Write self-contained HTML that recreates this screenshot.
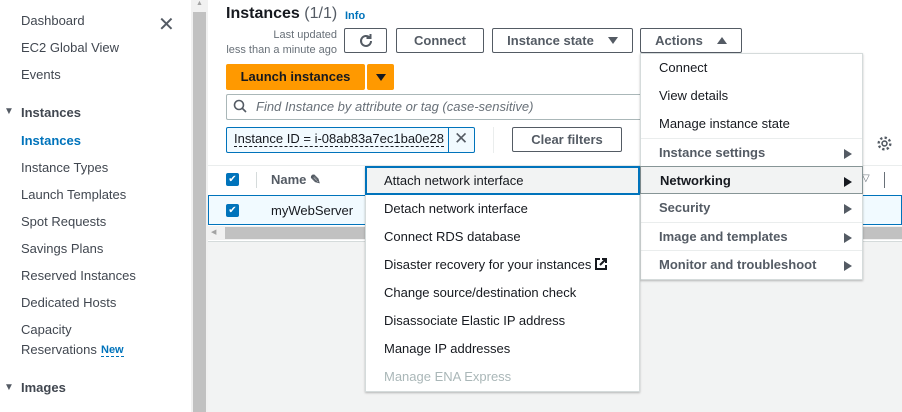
<!DOCTYPE html>
<html><head><style>
*{margin:0;padding:0;box-sizing:border-box}
body{width:902px;height:412px;overflow:hidden;font-family:"Liberation Sans",sans-serif;font-size:13px;color:#16191f;position:relative;background:#fff}
.a{position:absolute;white-space:nowrap}
.nav{left:21px;color:#414750}
.btn{position:absolute;border:1px solid #545b64;border-radius:2px;background:#fff;font-weight:bold;color:#545b64;display:flex;align-items:center;justify-content:center;height:25px}
.mi{position:absolute;left:0;right:0;height:28px;line-height:28px;padding-left:18px}
.sec{font-weight:bold;color:#545b64}
.arr{position:absolute;right:10px;top:10px;width:0;height:0;border-left:8px solid #545b64;border-top:5px solid transparent;border-bottom:5px solid transparent}
.tri{display:inline-block;width:0;height:0;border-left:5px solid transparent;border-right:5px solid transparent;margin-left:14px}
</style></head><body>
<!-- sidebar -->
<div class="a nav" style="top:13px">Dashboard</div>
<div class="a" style="left:158px;top:12px;font-size:20px;color:#545b64">✕</div>
<div class="a nav" style="top:40px">EC2 Global View</div>
<div class="a nav" style="top:67px">Events</div>
<div class="a" style="left:4px;top:106px;font-size:10px;color:#545b64">▼</div>
<div class="a" style="left:21px;top:105px;font-weight:bold;color:#414750">Instances</div>
<div class="a" style="left:21px;top:133px;font-weight:bold;color:#0073bb">Instances</div>
<div class="a nav" style="top:160px">Instance Types</div>
<div class="a nav" style="top:187px">Launch Templates</div>
<div class="a nav" style="top:214px">Spot Requests</div>
<div class="a nav" style="top:241px">Savings Plans</div>
<div class="a nav" style="top:268px">Reserved Instances</div>
<div class="a nav" style="top:295px">Dedicated Hosts</div>
<div class="a nav" style="top:322px">Capacity</div>
<div class="a nav" style="top:342px">Reservations</div>
<div class="a" style="left:101px;top:344px;font-size:11px;font-weight:bold;color:#0073bb;border-bottom:1px dashed #0073bb">New</div>
<div class="a" style="left:4px;top:382px;font-size:10px;color:#545b64">▼</div>
<div class="a" style="left:21px;top:380px;font-weight:bold;color:#414750">Images</div>
<!-- scrollbar -->
<div class="a" style="left:191px;top:0;width:17px;height:412px;background:#f1f1f1"></div>
<div class="a" style="left:193px;top:12px;width:13px;height:400px;background:#c1c1c1"></div>
<div class="a" style="left:196px;top:0;font-size:7px;color:#a3a3a3">▲</div>
<!-- main -->
<div class="a" style="left:208px;top:0;width:694px;height:412px;background:#f2f3f3"></div>
<div class="a" style="left:208px;top:0;width:694px;height:242px;background:#fff;border-bottom:1px solid #d5dbdb"></div>
<div class="a" style="left:226px;top:5px;font-size:16px;font-weight:bold">Instances <span style="font-weight:normal;color:#545b64">(1/1)</span></div>
<div class="a" style="left:345px;top:10px;font-size:11px;font-weight:bold;color:#0073bb">Info</div>
<div class="a" style="left:226px;top:28px;width:111px;text-align:right;font-size:11px;color:#687078;line-height:15px;white-space:normal">Last updated<br>less than a minute ago</div>
<div class="btn" style="left:344px;top:28px;width:43px;"><svg width="16" height="16" viewBox="0 0 16 16"><path d="M13 8a5 5 0 1 1-1.5-3.6" fill="none" stroke="#545b64" stroke-width="2"/><path d="M12.5 1v4h-4" fill="none" stroke="#545b64" stroke-width="2"/></svg></div>
<div class="btn" style="left:396px;top:28px;width:88px">Connect</div>
<div class="btn" style="left:492px;top:28px;width:141px">Instance state<span class="tri" style="border-top:7px solid #545b64"></span></div>
<div class="btn" style="left:640px;top:28px;width:102px">Actions<span class="tri" style="border-bottom:7px solid #545b64"></span></div>
<div class="a" style="left:226px;top:64px;width:139px;height:26px;background:#ff9900;border-radius:2px;font-weight:bold;text-align:center;line-height:26px">Launch instances</div>
<div class="a" style="left:367px;top:64px;width:27px;height:26px;background:#ff9900;border-radius:2px;display:flex;align-items:center;justify-content:center"><span style="width:0;height:0;border-left:5px solid transparent;border-right:5px solid transparent;border-top:7px solid #16191f"></span></div>
<div class="a" style="left:226px;top:94px;width:430px;height:26px;border:1px solid #aab7b8;border-radius:2px"></div>
<svg class="a" style="left:233px;top:99px" width="14" height="14" viewBox="0 0 14 14"><circle cx="6" cy="6" r="4.5" fill="none" stroke="#545b64" stroke-width="1.6"/><path d="M9.5 9.5l3.5 3.5" stroke="#545b64" stroke-width="1.6"/></svg>
<div class="a" style="left:256px;top:99px;font-style:italic;color:#687078">Find Instance by attribute or tag (case-sensitive)</div>
<div class="a" style="left:226px;top:127px;width:249px;height:26px;border:1px solid #0073bb;border-radius:2px;background:#f1faff"></div>
<div class="a" style="left:448px;top:127px;width:1px;height:26px;background:#0073bb"></div>
<div class="a" style="left:234px;top:131px;border-bottom:1px dashed #16191f;line-height:15px">Instance ID = i-08ab83a7ec1ba0e28</div>
<div class="a" style="left:454px;top:129px;font-size:17px;color:#545b64">✕</div>
<div class="a" style="left:493px;top:127px;width:1px;height:26px;background:#eaeded"></div>
<div class="btn" style="left:512px;top:127px;width:110px">Clear filters</div>
<svg class="a" style="left:876px;top:135px" width="17" height="17" viewBox="0 0 16 16"><circle cx="8" cy="8" r="2.3" fill="none" stroke="#545b64" stroke-width="1.5"/><circle cx="8" cy="8" r="5.5" fill="none" stroke="#545b64" stroke-width="2.2" stroke-dasharray="2.2 2.1"/></svg>
<div class="a" style="left:208px;top:165px;width:694px;height:1px;background:#eaeded"></div>
<div class="a" style="left:226px;top:173px;width:13px;height:13px;background:#0073bb;border-radius:2px;color:#fff;font-size:10px;text-align:center;line-height:13px">✔</div>
<div class="a" style="left:256px;top:172px;width:1px;height:16px;background:#d5dbdb"></div>
<div class="a" style="left:271px;top:172px;font-weight:bold;color:#545b64">Name ✎</div>
<div class="a" style="left:862px;top:173px;font-size:10px;color:#687078">▽</div>
<div class="a" style="left:884px;top:172px;width:1px;height:16px;background:#687078"></div>
<div class="a" style="left:208px;top:195px;width:694px;height:30px;background:#f1faff;border:1px solid #0073bb"></div>
<div class="a" style="left:226px;top:204px;width:13px;height:13px;background:#0073bb;border-radius:2px;color:#fff;font-size:10px;text-align:center;line-height:13px">✔</div>
<div class="a" style="left:271px;top:203px">myWebServer</div>
<div class="a" style="left:208px;top:226px;width:694px;height:14px;background:#f1f1f1"></div>
<div class="a" style="left:225px;top:227px;width:677px;height:12px;background:#c1c1c1"></div>
<div class="a" style="left:211px;top:228px;font-size:7px;color:#a3a3a3">◀</div>
<!-- actions menu -->
<div class="a" style="left:640px;top:53px;width:223px;height:227px;background:#fff;border:1px solid #d5dbdb;box-shadow:0 1px 2px rgba(0,0,0,.25)">
<div class="mi" style="top:0">Connect</div>
<div class="mi" style="top:28px">View details</div>
<div class="mi" style="top:56px">Manage instance state</div>
<div class="mi sec" style="top:84px;border-top:1px solid #eaeded">Instance settings<span class="arr"></span></div>
<div class="mi" style="top:112px;font-weight:bold;background:#f2f3f3;border:1px solid #879596;left:-1px;right:-1px;padding-left:19px">Networking<span class="arr" style="border-left-color:#16191f"></span></div>
<div class="mi sec" style="top:140px">Security<span class="arr"></span></div>
<div class="mi sec" style="top:168px;border-top:1px solid #eaeded">Image and templates<span class="arr"></span></div>
<div class="mi sec" style="top:196px;border-top:1px solid #eaeded">Monitor and troubleshoot<span class="arr"></span></div>
</div>
<!-- submenu -->
<div class="a" style="left:365px;top:166px;width:275px;height:226px;background:#fff;border:1px solid #d5dbdb;box-shadow:0 1px 2px rgba(0,0,0,.25)">
<div class="mi" style="top:-1px;left:-1px;right:-1px;height:29px;background:#f2f3f3;border:2px solid #0073bb;padding-left:17px;line-height:25px">Attach network interface</div>
<div class="mi" style="top:28px">Detach network interface</div>
<div class="mi" style="top:56px">Connect RDS database</div>
<div class="mi" style="top:84px">Disaster recovery for your instances <svg width="12" height="12" viewBox="0 0 12 12" style="vertical-align:-1px"><path d="M5 1H1v10h10V7M7 1h4v4M11 1L5 7" fill="none" stroke="#16191f" stroke-width="2"/></svg></div>
<div class="mi" style="top:112px">Change source/destination check</div>
<div class="mi" style="top:140px">Disassociate Elastic IP address</div>
<div class="mi" style="top:168px">Manage IP addresses</div>
<div class="mi" style="top:196px;color:#aab7b8">Manage ENA Express</div>
</div>
</body></html>
